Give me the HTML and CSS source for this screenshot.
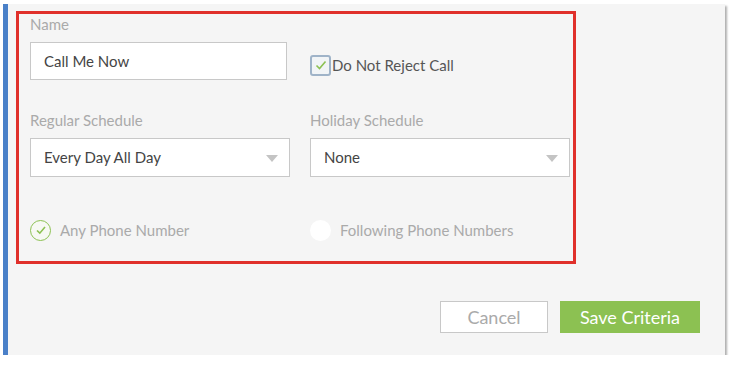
FILE: index.html
```html
<!DOCTYPE html>
<html lang="en">
<head>
    <meta charset="UTF-8">
    <meta name="viewport" content="width=device-width, initial-scale=1.0">
    <title>Criteria</title>
    <link rel="stylesheet" href="styles.css">
</head>
<body>
    <div class="panel">
        <div class="criteria">
            <div class="field">
                <label class="field-label">Name</label>
                <div class="text-input name-input">Call Me Now</div>
            </div>
            <div class="field check-field">
                <span class="checkbox">
                    <svg width="14" height="14" viewBox="0 0 14 14"><path d="M2.5 7.5 L5.5 10.5 L11.5 3.5" fill="none" stroke="#8cc152" stroke-width="1.6"/></svg>
                </span>
                <span class="check-label">Do Not Reject Call</span>
            </div>

            <div class="field">
                <label class="field-label">Regular Schedule</label>
                <div class="text-input select">Every Day All Day<span class="caret"></span></div>
            </div>
            <div class="field">
                <label class="field-label">Holiday Schedule</label>
                <div class="text-input select">None<span class="caret"></span></div>
            </div>

            <div class="radio-row">
                <span class="radio checked">
                    <svg width="14" height="14" viewBox="0 0 14 14"><path d="M3 7.5 L5.8 10.2 L11 4" fill="none" stroke="#8cc152" stroke-width="1.6"/></svg>
                </span>
                <span class="radio-label">Any Phone Number</span>
            </div>
            <div class="radio-row">
                <span class="radio"></span>
                <span class="radio-label">Following Phone Numbers</span>
            </div>
        </div>

        <div class="actions">
            <button class="btn btn-cancel">Cancel</button>
            <button class="btn btn-save">Save Criteria</button>
        </div>
    </div>
</body>
</html>
```

FILE: styles.css
```css
body {
    margin: 0;
    background-color: #fff;
    font-family: Lato, "Open Sans", sans-serif;
}
.panel {
    box-sizing: border-box;
    width: 722px;
    height: 351px;
    margin: 4px 0 0 3px;
    padding: 7px 25px 0 8px;
    background-color: #f5f5f5;
    border-left: 5px solid #4a80c8;
    box-shadow: 2px 2px 2px #b0b0b0;
}
.criteria {
    box-sizing: border-box;
    width: 560px;
    height: 253px;
    border: 3px solid #e0302b;
    padding: 2px 0 0 11px;
    display: grid;
    grid-template-columns: 260px 260px;
    column-gap: 20px;
    grid-template-rows: 64px 75px 22px;
    row-gap: 32px;
    align-content: start;
}
.field-label {
    display: block;
    font-size: 15px;
    line-height: 17px;
    color: #aaa;
    margin-bottom: 9px;
}
.text-input {
    box-sizing: border-box;
    height: 38px;
    background-color: #fff;
    border: 1px solid #c8c8c8;
    padding-left: 13px;
    font-size: 15px;
    line-height: 36px;
    color: #444;
    position: relative;
}
.name-input {
    width: 257px;
}
.select {
    height: 39px;
    line-height: 37px;
}
.caret {
    position: absolute;
    right: 11px;
    top: 16px;
    width: 0;
    height: 0;
    border-left: 6px solid transparent;
    border-right: 6px solid transparent;
    border-top: 7px solid #c4c4c4;
}
.check-field {
    display: flex;
    align-items: center;
    padding-top: 38px;
    height: 22px;
}
.checkbox {
    box-sizing: border-box;
    width: 21px;
    height: 21px;
    border: 2px solid #9fb3c8;
    border-radius: 3px;
    background-color: #f1f4f6;
    display: flex;
    align-items: center;
    justify-content: center;
}
.check-label {
    font-size: 15px;
    color: #555;
    margin-left: 1px;
}
.radio-row {
    display: flex;
    align-items: center;
}
.radio {
    box-sizing: border-box;
    width: 21px;
    height: 21px;
    border-radius: 50%;
    background-color: #fff;
    display: flex;
    align-items: center;
    justify-content: center;
}
.radio.checked {
    border: 1.5px solid #8cc152;
    background-color: #f7f9f3;
}
.radio-label {
    font-size: 15px;
    color: #aaa;
    margin-left: 9px;
}
.actions {
    display: flex;
    justify-content: flex-end;
    gap: 12px;
    margin-top: 37px;
}
.btn {
    box-sizing: border-box;
    height: 32px;
    font-family: Lato, "Open Sans", sans-serif;
    font-size: 18px;
    border: none;
    padding: 0;
    cursor: pointer;
}
.btn-cancel {
    width: 108px;
    background-color: #fff;
    border: 1px solid #c8c8c8;
    color: #aaa;
}
.btn-save {
    width: 140px;
    background-color: #8cc152;
    color: #fff;
}
```
